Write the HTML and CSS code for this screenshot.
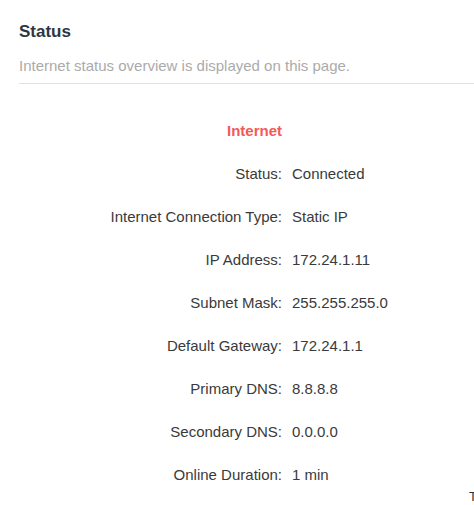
FILE: index.html
```html
<!DOCTYPE html>
<html lang="en">
<head>
<meta charset="utf-8">
<title>Status</title>
<link rel="stylesheet" href="styles.css">
</head>
<body>
<div class="page">
  <h2 class="title">Status</h2>
  <p class="desc">Internet status overview is displayed on this page.</p>
  <div class="rule"></div>
  <div class="info">
    <div class="section">Internet</div><div></div>
    <div class="label">Status:</div><div class="value">Connected</div>
    <div class="label">Internet Connection Type:</div><div class="value">Static IP</div>
    <div class="label">IP Address:</div><div class="value">172.24.1.11</div>
    <div class="label">Subnet Mask:</div><div class="value">255.255.255.0</div>
    <div class="label">Default Gateway:</div><div class="value">172.24.1.1</div>
    <div class="label">Primary DNS:</div><div class="value">8.8.8.8</div>
    <div class="label">Secondary DNS:</div><div class="value">0.0.0.0</div>
    <div class="label">Online Duration:</div><div class="value">1 min</div>
  </div>
  <div class="more">Tip</div>
</div>
</body>
</html>
```
FILE: styles.css
```css
html, body {
  margin: 0;
  padding: 0;
  overflow: hidden;
  background: #ffffff;
}
body {
  font-family: "Liberation Sans", Arial, sans-serif;
  color: #3a3a3a;
}
.page {
  position: relative;
  padding: 20px 0 0 19px;
  height: 485px;
}
.title {
  margin: 0;
  font-size: 17px;
  line-height: 24px;
  font-weight: bold;
  color: #2e3740;
}
.desc {
  margin: 12px 0 0 0;
  font-size: 15px;
  line-height: 20px;
  color: #ababab;
}
.rule {
  margin-top: 7px;
  height: 1px;
  background: #e2e2e2;
}
.info {
  display: grid;
  grid-template-columns: 263px auto;
  column-gap: 10px;
  row-gap: 23px;
  margin-top: 37px;
  font-size: 15px;
  line-height: 20px;
}
.section {
  text-align: right;
  font-weight: bold;
  color: #f25a5a;
}
.label {
  text-align: right;
  color: #3a3a3a;
}
.value {
  color: #3a3a3a;
}
.more {
  position: absolute;
  left: 469px;
  top: 489px;
  font-size: 13px;
  line-height: 16px;
  color: #333;
  white-space: nowrap;
}
```
